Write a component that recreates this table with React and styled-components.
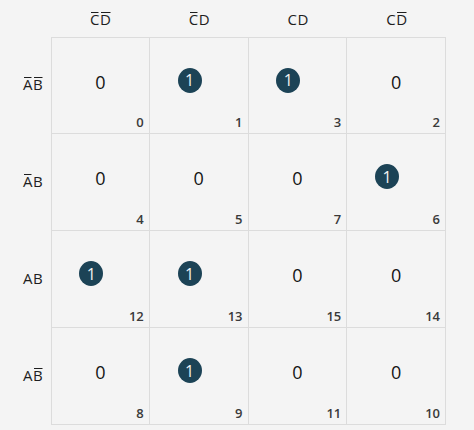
import React from "react";
import styled, { createGlobalStyle } from "styled-components";

const GlobalStyle = createGlobalStyle`
  html, body {
    margin: 0;
    padding: 0;
    background: #f4f4f4;
  }
  * {
    box-sizing: border-box;
  }
`;

const cols = [
  [true, true],
  [true, false],
  [false, false],
  [false, true],
];

const rows = [
  [true, true],
  [true, false],
  [false, false],
  [false, true],
];

const cells = [
  [
    { v: 0, i: 0 },
    { v: 1, i: 1 },
    { v: 1, i: 3 },
    { v: 0, i: 2 },
  ],
  [
    { v: 0, i: 4 },
    { v: 0, i: 5 },
    { v: 0, i: 7 },
    { v: 1, i: 6 },
  ],
  [
    { v: 1, i: 12 },
    { v: 1, i: 13 },
    { v: 0, i: 15 },
    { v: 0, i: 14 },
  ],
  [
    { v: 0, i: 8 },
    { v: 1, i: 9 },
    { v: 0, i: 11 },
    { v: 0, i: 10 },
  ],
];

// one letter per variable, with a bar over the negated ones
const Term = ({ names, bars }) => (
  <>
    {names.map((n, k) => (
      <Letter key={k} $bar={bars[k]}>
        {n}
      </Letter>
    ))}
  </>
);

const App = () => {
  return (
    <>
      <GlobalStyle />
      <Map>
        <Corner />
        {cols.map((c, k) => (
          <ColLabel key={k}>
            <Term names={["C", "D"]} bars={c} />
          </ColLabel>
        ))}
        {rows.map((r, ri) => (
          <React.Fragment key={ri}>
            <RowLabel>
              <Term names={["A", "B"]} bars={r} />
            </RowLabel>
            {cells[ri].map((cell, ci) => (
              <Cell key={ci} $first={ci === 0} $top={ri === 0}>
                <ValueArea>
                  {cell.v ? <One>1</One> : <Zero>0</Zero>}
                </ValueArea>
                <Index>{cell.i}</Index>
              </Cell>
            ))}
          </React.Fragment>
        ))}
      </Map>
    </>
  );
};

export default App;

const Map = styled.div`
  display: grid;
  grid-template-columns: 51px repeat(4, 98.75px);
  grid-template-rows: 37px repeat(4, 97px);
  font-family: "Open Sans", "Liberation Sans", sans-serif;
  color: #1e1e1e;
`;

const Corner = styled.div``;

const ColLabel = styled.div`
  display: flex;
  align-items: center;
  justify-content: center;
  font-size: 15px;
  padding-top: 3px;
`;

const RowLabel = styled.div`
  display: flex;
  align-items: center;
  justify-content: flex-end;
  padding-right: 8px;
  padding-bottom: 2px;
  font-size: 15px;
`;

const Letter = styled.span`
  display: inline-block;
  line-height: 1.05;
  margin: 0 0.3px;
  background: ${(p) =>
    p.$bar
      ? "linear-gradient(#1e1e1e, #1e1e1e) no-repeat center top / calc(100% - 1.5px) 1.3px"
      : "none"};
`;

const Cell = styled.div`
  display: flex;
  flex-direction: column;
  border-right: 1px solid #dcdcdc;
  border-bottom: 1px solid #dcdcdc;
  border-left: ${(p) => (p.$first ? "1px solid #dcdcdc" : "none")};
  border-top: ${(p) => (p.$top ? "1px solid #dcdcdc" : "none")};
`;

const ValueArea = styled.div`
  flex: 1;
  display: flex;
  align-items: center;
  justify-content: center;
  padding-top: 9px;
`;

const Zero = styled.span`
  font-size: 18px;
  line-height: 1;
  color: #151515;
`;

const One = styled.span`
  display: flex;
  align-items: center;
  justify-content: center;
  width: 24px;
  height: 25px;
  margin-right: 18px;
  margin-bottom: 3px;
  border-radius: 50%;
  background: #1c4356;
  color: #f2f2f2;
  font-size: 16px;
  line-height: 1;
`;

const Index = styled.div`
  align-self: flex-end;
  padding: 0 5px 4px 0;
  font-size: 13px;
  font-weight: 600;
  line-height: 1;
  color: #3a3a3a;
`;
